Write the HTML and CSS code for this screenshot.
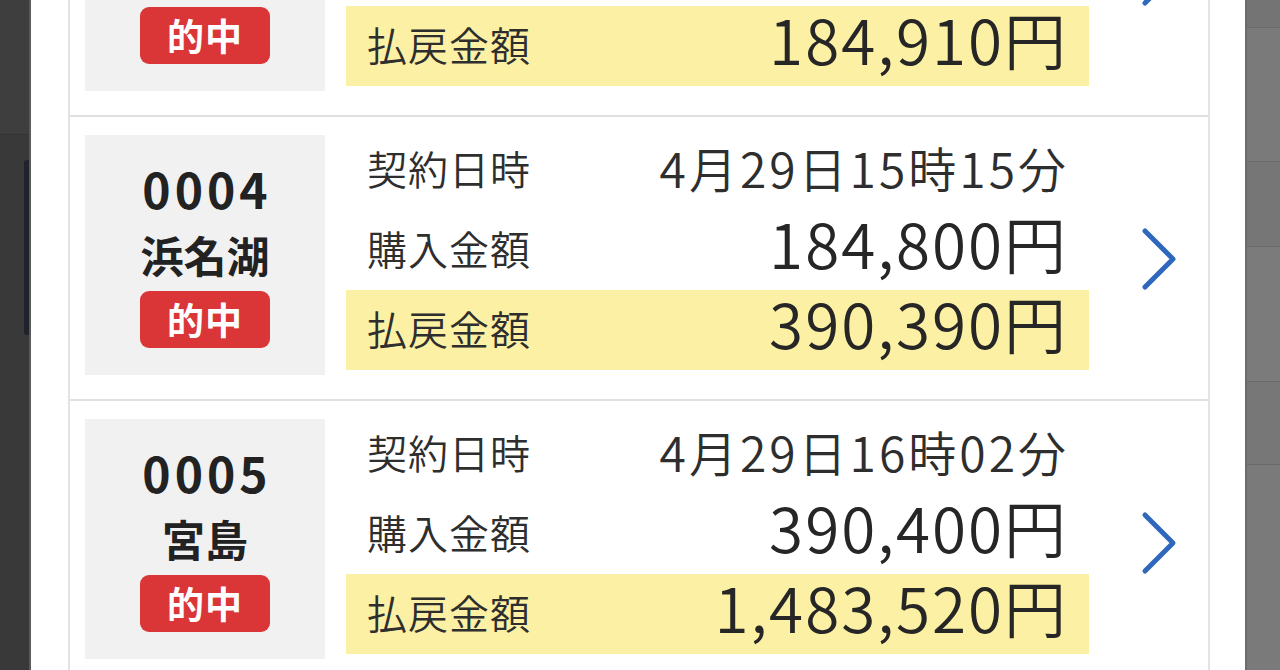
FILE: index.html
```html
<!DOCTYPE html>
<html lang="ja">
<head>
<meta charset="utf-8">
<link rel="stylesheet" href="styles.css">
</head>
<body>
<div class="screen">
  <div class="left-strip">
    <div class="ls-top"></div>
    <div class="ls-bottom"><div class="ls-bar"></div></div>
  </div>
  <div class="panel">
    <div class="list">
      <div class="row">
        <div class="cell">
          <div class="num">0003</div>
          <div class="place">常滑</div>
          <div class="badge">的中</div>
        </div>
        <div class="mid">
          <div class="line"><span class="label">契約日時</span><span class="date">4月29日14時20分</span></div>
          <div class="line"><span class="label">購入金額</span><span class="amount">184,900円</span></div>
          <div class="line hl"><span class="label">払戻金額</span><span class="amount">184,910円</span></div>
        </div>
        <div class="arrow"><svg viewBox="0 0 40 64" width="40" height="64"><path d="M6 4 L34 32 L6 60" fill="none" stroke="#2f67bd" stroke-width="5" stroke-linecap="round" stroke-linejoin="round"/></svg></div>
      </div>
      <div class="row">
        <div class="cell">
          <div class="num">0004</div>
          <div class="place">浜名湖</div>
          <div class="badge">的中</div>
        </div>
        <div class="mid">
          <div class="line"><span class="label">契約日時</span><span class="date">4月29日15時15分</span></div>
          <div class="line"><span class="label">購入金額</span><span class="amount">184,800円</span></div>
          <div class="line hl"><span class="label">払戻金額</span><span class="amount">390,390円</span></div>
        </div>
        <div class="arrow"><svg viewBox="0 0 40 64" width="40" height="64"><path d="M6 4 L34 32 L6 60" fill="none" stroke="#2f67bd" stroke-width="5" stroke-linecap="round" stroke-linejoin="round"/></svg></div>
      </div>
      <div class="row">
        <div class="cell">
          <div class="num">0005</div>
          <div class="place">宮島</div>
          <div class="badge">的中</div>
        </div>
        <div class="mid">
          <div class="line"><span class="label">契約日時</span><span class="date">4月29日16時02分</span></div>
          <div class="line"><span class="label">購入金額</span><span class="amount">390,400円</span></div>
          <div class="line hl"><span class="label">払戻金額</span><span class="amount">1,483,520円</span></div>
        </div>
        <div class="arrow"><svg viewBox="0 0 40 64" width="40" height="64"><path d="M6 4 L34 32 L6 60" fill="none" stroke="#2f67bd" stroke-width="5" stroke-linecap="round" stroke-linejoin="round"/></svg></div>
      </div>
    </div>
  </div>
  <div class="right-strip">
    <div class="rs s1"></div>
    <div class="rs s2"></div>
    <div class="rs s3"></div>
    <div class="rs s4"></div>
    <div class="rs s5"></div>
    <div class="rs s6"></div>
  </div>
</div>
</body>
</html>
```

FILE: styles.css
```css
* { box-sizing: border-box; }
html, body { margin: 0; padding: 0; }
body {
  width: 1280px;
  height: 670px;
  overflow: hidden;
  background: #ffffff;
  font-family: "Noto Sans CJK JP", "Noto Sans", sans-serif;
  color: #2b2b2b;
}
.screen {
  display: flex;
  width: 1280px;
  height: 670px;
}
.left-strip {
  width: 31px;
  display: flex;
  flex-direction: column;
  border-right: 2px solid #5a5a5a;
}
.ls-top { height: 135px; background: #3e3e3e; border-bottom: 1px solid #333; }
.ls-bottom {
  flex: 1;
  background: #393939;
  display: flex;
  justify-content: flex-end;
  align-items: flex-start;
}
.ls-bar {
  width: 5px;
  height: 175px;
  margin-top: 25px;
  background: #20222c;
  border-radius: 3px 0 0 3px;
}
.panel {
  flex: 1;
  background: #fff;
  padding: 0 35px 0 37px;
  overflow: hidden;
}
.list {
  margin-top: -169px;
  border-left: 2px solid #e3e3e3;
  border-right: 2px solid #e3e3e3;
}
.row {
  height: 284px;
  border-top: 2px solid #e0e0e0;
  display: flex;
  padding: 13px 0 0 15px;
}
.cell {
  width: 240px;
  height: 240px;
  margin-top: 5px;
  background: #f1f1f2;
  display: flex;
  flex-direction: column;
  align-items: center;
  justify-content: flex-end;
  padding-bottom: 27px;
}
.num {
  font-weight: 700;
  font-size: 48px;
  line-height: 56px;
  letter-spacing: 4px;
  margin-right: -4px;
  color: #222;
  margin-bottom: 10px;
}
.place {
  font-weight: 700;
  font-size: 43px;
  line-height: 56px;
  color: #222;
  margin-bottom: 9px;
}
.badge {
  width: 130px;
  height: 57px;
  background: #db3637;
  border-radius: 9px;
  color: #fff;
  font-weight: 700;
  font-size: 37px;
  line-height: 57px;
  text-align: center;
  letter-spacing: 1px;
}
.mid {
  width: 743px;
  margin-left: 21px;
  display: flex;
  flex-direction: column;
}
.line {
  height: 80px;
  display: flex;
  align-items: center;
  justify-content: space-between;
  padding: 0 23px 0 21px;
}
.line.hl { background: #fcf0a4; }
.label {
  font-size: 40px;
  line-height: 48px;
  font-weight: 350;
  color: #2e2e2e;
  letter-spacing: 1px;
  margin-bottom: 4px;
}
.date {
  font-size: 48px;
  line-height: 56px;
  font-weight: 350;
  color: #2e2e2e;
  letter-spacing: 3px;
  margin-right: -3px;
  margin-bottom: 6px;
}
.amount {
  font-size: 62px;
  line-height: 62px;
  font-weight: 350;
  color: #262626;
  letter-spacing: 2px;
  margin-right: -2px;
  margin-bottom: 16px;
}
.arrow {
  display: flex;
  align-items: center;
  padding-left: 50px;
  margin-top: -12px;
}
.arrow svg { display: block; }
.right-strip {
  width: 35px;
  display: flex;
  flex-direction: column;
  background: #787878;
  border-left: 2px solid #6c6c6c;
}
.rs { border-bottom: 1px solid #6a6a6a; }
.s1 { height: 28px; background: #747474; }
.s2 { height: 134px; background: #7a7a7a; }
.s3 { height: 85px; background: #767676; }
.s4 { height: 135px; background: #7b7b7b; }
.s5 { height: 83px; background: #777777; }
.s6 { flex: 1; background: #7a7a7a; border-bottom: none; }
```
